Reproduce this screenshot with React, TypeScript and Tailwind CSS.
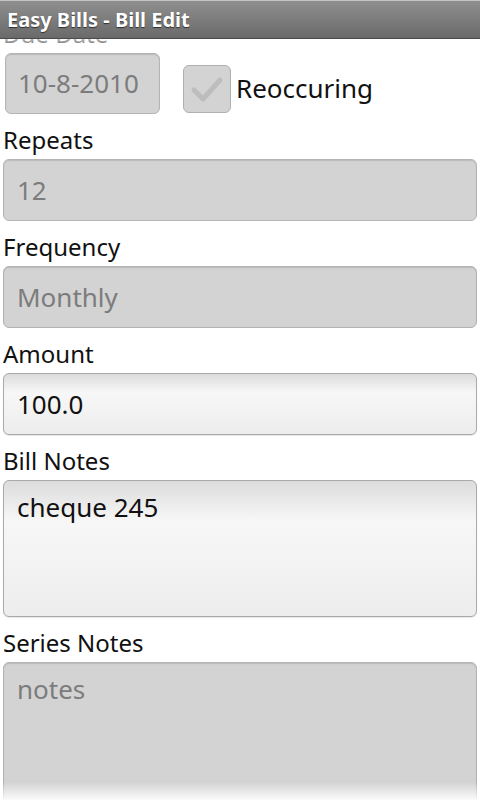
import React from 'react';

const font = { fontFamily: '"Noto Sans", "Open Sans", "DejaVu Sans", sans-serif' };

function Label({ text }: { text: string }) {
  return <div className="mt-[10px] mb-[3px] h-[32px] pl-[3px] text-[24px] leading-[32px] text-[#111]">{text}</div>;
}

function DisabledBox({ value, tall }: { value: string; tall?: boolean }) {
  return (
    <div
      className={`mx-[3px] rounded-[6px] border border-[#b4b4b4] bg-[#d3d3d3] shadow-[inset_0_1px_1px_rgba(0,0,0,0.12)] px-[13px] text-[26px] text-[#7c7c7c] ${
        tall ? 'h-[150px] pt-[9px] leading-[34px]' : 'h-[62px] flex items-center'
      }`}
    >
      {value}
    </div>
  );
}

function InputBox({ value, tall }: { value: string; tall?: boolean }) {
  return (
    <div
      className={`mx-[3px] rounded-[6px] border border-[#a9a9a9] bg-gradient-to-b from-[#dcdcdc] via-[#f7f7f7] via-30% to-[#ededed] shadow-[0_1px_1px_rgba(0,0,0,0.1)] px-[13px] text-[26px] text-[#111] ${
        tall ? 'h-[137px] pt-[9px] leading-[34px]' : 'h-[62px] flex items-center'
      }`}
    >
      {value}
    </div>
  );
}

export default function App() {
  return (
    <div className="relative w-[480px] h-[800px] overflow-hidden bg-white" style={font}>
      <div className="relative z-20 h-[39px] border-t border-[#c4c4c4] border-b border-b-[#4a4a4a] bg-gradient-to-b from-[#8f8f8f] to-[#6a6a6a] pl-[7px] flex items-center">
        <span className="text-[20px] font-bold text-white [text-shadow:0_1px_1px_rgba(0,0,0,0.6)]">Easy Bills - Bill Edit</span>
      </div>
      <div className="absolute left-0 right-0 top-[39px] h-[14px] z-10 bg-gradient-to-b from-white/70 to-white/0 pointer-events-none" />

      <div className="-mt-[31px]">
        <Label text="Due Date" />
        <div className="flex items-center">
          <div className="ml-[5px] w-[155px] h-[61px] rounded-[6px] border border-[#b4b4b4] bg-[#d3d3d3] shadow-[inset_0_1px_1px_rgba(0,0,0,0.12)] flex items-center pl-[12px] text-[26px] text-[#7c7c7c]">
            10-8-2010
          </div>
          <div className="mt-[10px] flex items-center">
            <div className="ml-[23px] w-[48px] h-[48px] rounded-[6px] border border-[#b0b0b0] bg-[#d3d3d3] flex items-center justify-center">
              <svg width="36" height="30" viewBox="0 0 36 30">
                <path d="M5 16 L14 25 L31 6" fill="none" stroke="#bdbdbd" strokeWidth="5" strokeLinecap="round" strokeLinejoin="round" />
              </svg>
            </div>
            <span className="ml-[5px] text-[26px] text-[#111]">Reoccuring</span>
          </div>
        </div>

        <Label text="Repeats" />
        <DisabledBox value="12" />

        <Label text="Frequency" />
        <DisabledBox value="Monthly" />

        <Label text="Amount" />
        <InputBox value="100.0" />

        <Label text="Bill Notes" />
        <InputBox value="cheque 245" tall />

        <Label text="Series Notes" />
        <DisabledBox value="notes" tall />
      </div>

      <div className="absolute left-0 right-0 bottom-0 h-[18px] z-10 bg-gradient-to-t from-white/90 to-white/0 pointer-events-none" />
    </div>
  );
}
